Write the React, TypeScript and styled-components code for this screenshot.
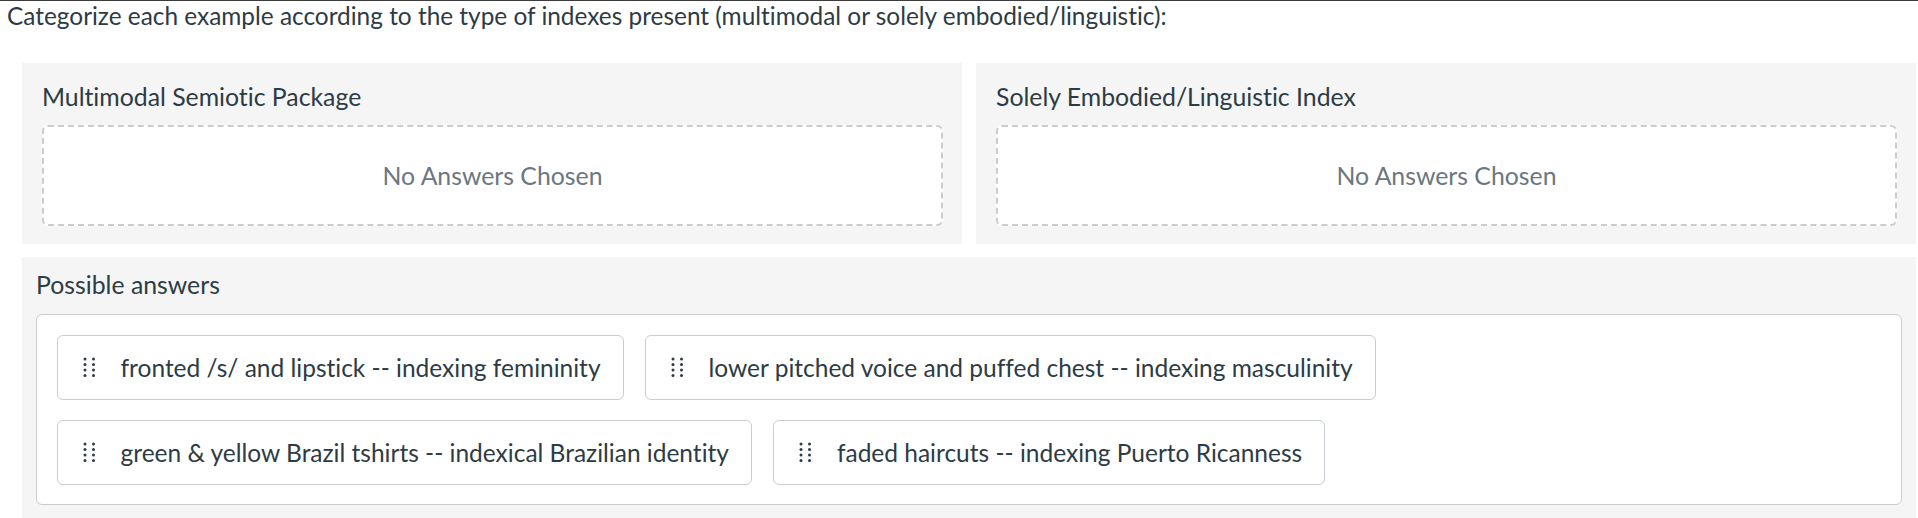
import styled, { createGlobalStyle } from "styled-components";

const GlobalStyle = createGlobalStyle`
   body {
      margin: 0;
      background: #ffffff;
      font-family: Lato, "Noto Sans", sans-serif;
      font-variant-ligatures: none;
      color: #2d3b45;
   }
`;

const Page = styled.div`
   border-top: 1px solid #3b3b3b;
`;

const Prompt = styled.p`
   margin: 0;
   padding: 0 0 0 7px;
   font-size: 24.4px;
   line-height: 1.2;
`;

const Body = styled.div`
   padding: 0 2px 0 22px;
   margin-top: 33px;
`;

const CategoryRow = styled.div`
   display: grid;
   grid-template-columns: 1fr 1fr;
   gap: 14px;
`;

const Panel = styled.section`
   background: #f5f5f5;
`;

const CategoryPanel = styled(Panel)`
   padding: 18.5px 19px 18px 20px;
`;

const Heading = styled.h3`
   margin: 0;
   font-size: 24.8px;
   font-weight: 400;
   line-height: 1.2;
`;

const DropZone = styled.div`
   margin-top: 13.7px;
   height: 101px;
   box-sizing: border-box;
   border: 2px dashed #c7cdd1;
   border-radius: 6px;
   background: #ffffff;
   display: flex;
   align-items: center;
   justify-content: center;
   font-size: 24.8px;
   color: #6b7780;
`;

const AnswersPanel = styled(Panel)`
   margin-top: 13px;
   padding: 12.5px 14px 14px;
`;

const AnswerList = styled.div`
   margin-top: 14.7px;
   background: #ffffff;
   border: 1.5px solid #c7cdd1;
   border-radius: 6px;
   padding: 19.5px;
   display: flex;
   flex-wrap: wrap;
   gap: 20px 21px;
`;

const Chip = styled.div`
   height: 65px;
   box-sizing: border-box;
   display: flex;
   align-items: center;
   padding: 0 22px 0 25px;
   border: 1.5px solid #c7cdd1;
   border-radius: 6px;
   background: #ffffff;
   font-size: 24.5px;
   white-space: nowrap;
`;

const Handle = styled.svg`
   flex: none;
   margin-right: 26px;
`;

function DragHandle() {
   const rows = [2, 7.5, 13, 18.5];
   return (
      <Handle width="12" height="21" viewBox="0 0 12 21" fill="#2d3b45">
         {rows.map((y) => (
            <g key={y}>
               <circle cx="2" cy={y} r="1.5" />
               <circle cx="10.5" cy={y} r="1.5" />
            </g>
         ))}
      </Handle>
   );
}

const categories = ["Multimodal Semiotic Package", "Solely Embodied/Linguistic Index"];

const answers = [
   "fronted /s/ and lipstick -- indexing femininity",
   "lower pitched voice and puffed chest -- indexing masculinity",
   "green & yellow Brazil tshirts -- indexical Brazilian identity",
   "faded haircuts -- indexing Puerto Ricanness",
];

function App() {
   return (
      <Page>
         <GlobalStyle />
         <Prompt>
            Categorize each example according to the type of indexes present (multimodal or solely
            embodied/linguistic):
         </Prompt>
         <Body>
            <CategoryRow>
               {categories.map((c) => (
                  <CategoryPanel key={c}>
                     <Heading>{c}</Heading>
                     <DropZone>No Answers Chosen</DropZone>
                  </CategoryPanel>
               ))}
            </CategoryRow>
            <AnswersPanel>
               <Heading>Possible answers</Heading>
               <AnswerList>
                  {answers.map((a) => (
                     <Chip key={a}>
                        <DragHandle />
                        {a}
                     </Chip>
                  ))}
               </AnswerList>
            </AnswersPanel>
         </Body>
      </Page>
   );
}

export default App;
